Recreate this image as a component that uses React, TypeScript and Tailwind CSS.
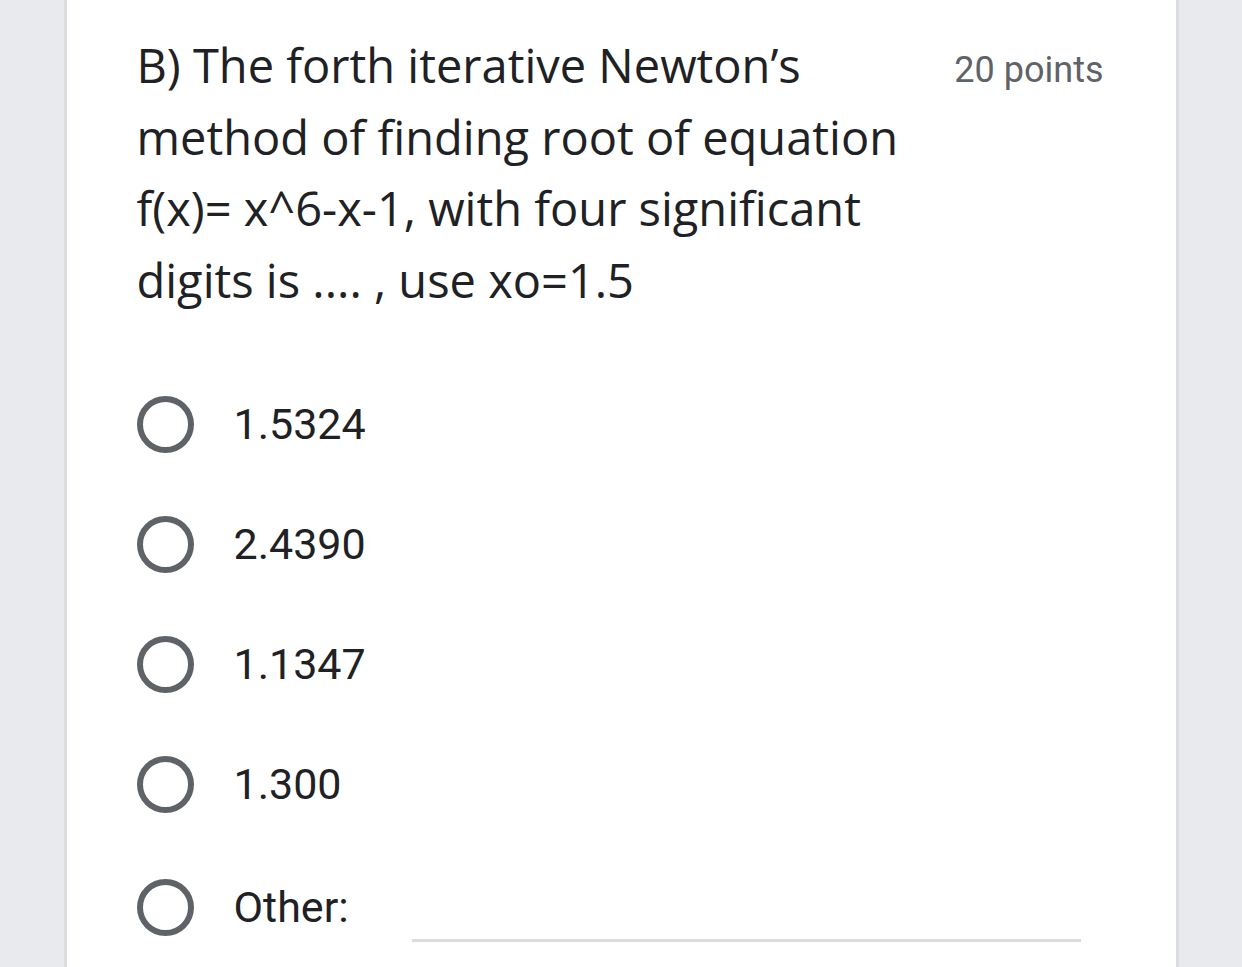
import React from "react";

const options = ["1.5324", "2.4390", "1.1347", "1.300"];

function Radio() {
  return (
    <div className="h-[57px] w-[57px] shrink-0 rounded-full border-[6px] border-[#5f6368]" />
  );
}

export default function App() {
  return (
    <div className="flex h-[967px] w-full justify-center overflow-hidden bg-[#e8eaee]">
      <div className="h-full w-[1115px] border-x-[3px] border-[#dadce0] bg-white pl-[70px] pr-[72px] pt-[30px]">
        {/* question header */}
        <div className="flex items-start justify-between">
          <div
            className="text-[47px] leading-[71.5px] text-[#202124]"
            style={{ fontFamily: '"Open Sans", sans-serif' }}
          >
            B) The forth iterative Newton’s
            <br />
            method of finding root of equation
            <br />
            f(x)= x^6-x-1, with four significant
            <br />
            digits is .... , use xo=1.5
          </div>
          <div className="pt-[16px] font-['Roboto',sans-serif] text-[36px] leading-[48px] text-[#5f6368]">
            20 points
          </div>
        </div>

        {/* options */}
        <div className="mt-[80px] flex flex-col gap-[63px]">
          {options.map((o) => (
            <div key={o} className="flex h-[57px] items-center gap-[40px]">
              <Radio />
              <span className="font-['Roboto',sans-serif] text-[43px] text-[#202124]">{o}</span>
            </div>
          ))}
          <div className="mt-[3px] flex h-[57px] items-center">
            <Radio />
            <span className="ml-[40px] font-['Roboto',sans-serif] text-[43px] text-[#202124]">Other:</span>
            <div className="ml-[63px] mr-[23px] mt-[66px] h-[3px] flex-1 bg-[#dadce0]" />
          </div>
        </div>
      </div>
    </div>
  );
}
